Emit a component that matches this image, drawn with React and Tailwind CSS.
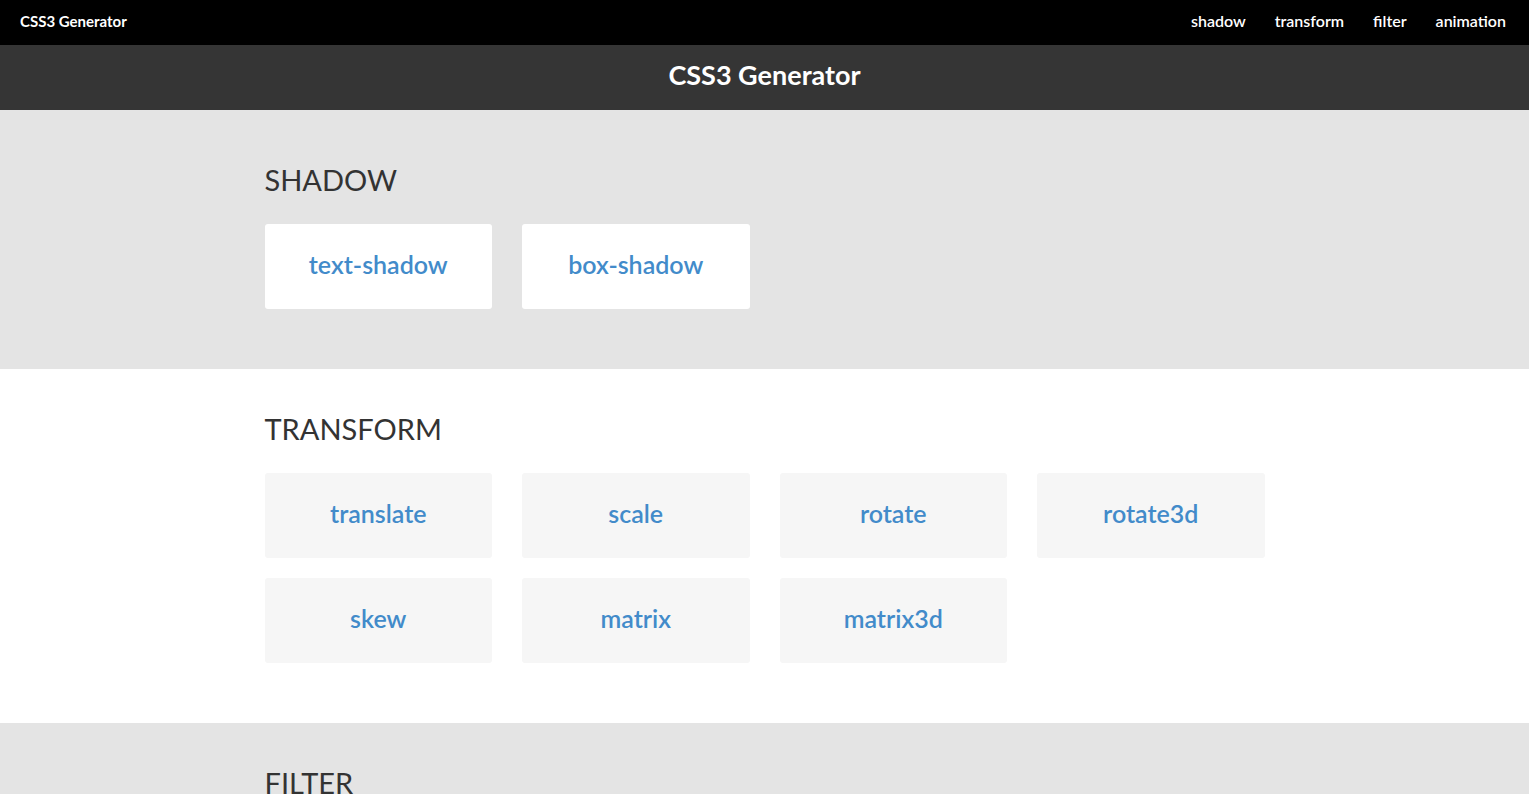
import React from 'react';

const navLinks = ['shadow', 'transform', 'filter', 'animation'];

const sections = [
  { title: 'SHADOW', items: ['text-shadow', 'box-shadow'], tone: 'gray', first: true },
  { title: 'TRANSFORM', items: ['translate', 'scale', 'rotate', 'rotate3d', 'skew', 'matrix', 'matrix3d'], tone: 'white' },
  { title: 'FILTER', items: ['blur', 'brightness', 'contrast', 'grayscale', 'hue-rotate', 'invert', 'opacity', 'saturate', 'sepia'], tone: 'gray' },
  { title: 'ANIMATION', items: ['transition', 'keyframes'], tone: 'white' },
];

function Section({ title, items, tone, first }) {
  const gray = tone === 'gray';
  return (
    <section className={`${gray ? 'bg-[#e4e4e4]' : 'bg-white'} ${first ? 'pt-[53px]' : 'pt-[43px]'} pb-[60px]`}>
      <div className="mx-auto w-[1000px]">
        {/* section heading */}
        <h2 className="text-[29px] leading-[1.2] font-normal text-[#333] mb-[26px]">{title}</h2>
        <div className="grid grid-cols-4 gap-x-[30px] gap-y-5">
          {items.map((item) => (
            <a
              key={item}
              href="#"
              className={`flex h-[85px] items-center justify-center rounded-[3px] ${gray ? 'bg-white' : 'bg-[#f6f6f6]'} text-[25px] font-semibold text-[#428bca] pb-[3px]`}
            >
              {item}
            </a>
          ))}
        </div>
      </div>
    </section>
  );
}

export default function App() {
  return (
    <div className="min-h-screen bg-white font-['Lato','Noto_Sans',sans-serif]">
      {/* top nav */}
      <nav className="flex h-[45px] items-center justify-between bg-black pl-5 pr-[23px] pb-[3px] text-white">
        <a href="#" className="text-[15px] font-bold">CSS3 Generator</a>
        <ul className="flex items-center gap-[29px]">
          {navLinks.map((l) => (
            <li key={l}>
              <a href="#" className="text-[16px] font-semibold">{l}</a>
            </li>
          ))}
        </ul>
      </nav>

      {/* page title */}
      <header className="flex h-[65px] items-center justify-center bg-[#353535] pb-1">
        <h1 className="text-[27px] font-bold text-white">CSS3 Generator</h1>
      </header>

      {sections.map((s) => (
        <Section key={s.title} {...s} />
      ))}
    </div>
  );
}
